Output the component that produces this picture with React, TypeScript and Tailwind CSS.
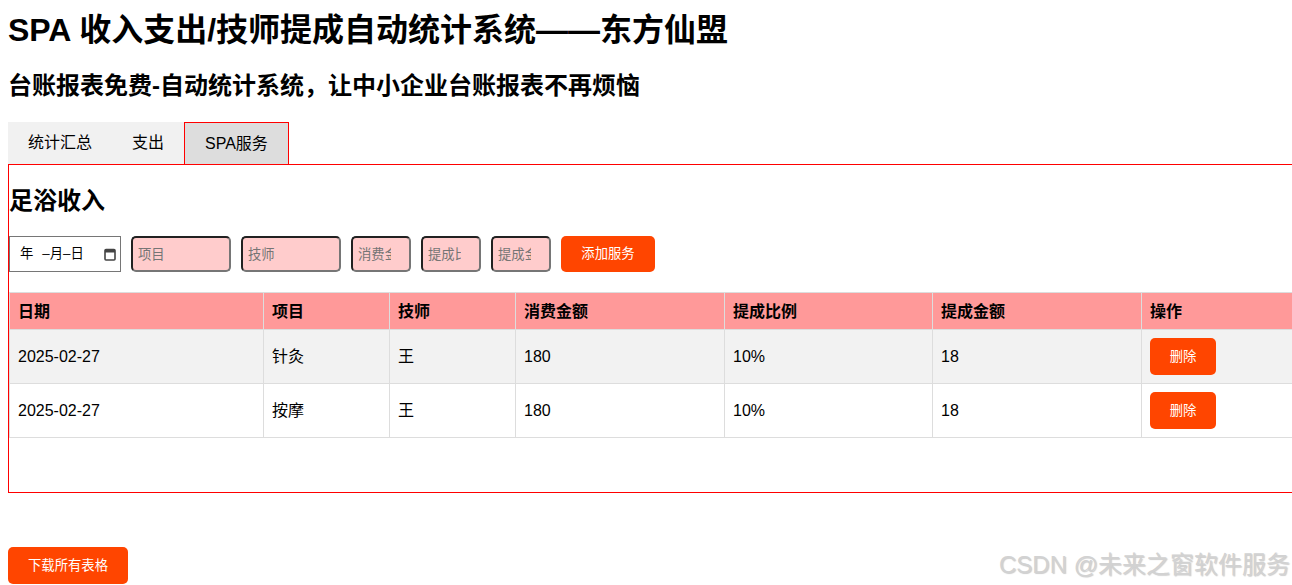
import { useState } from "react";

interface Service {
  date: string;
  item: string;
  tech: string;
  amount: number;
  rate: string;
  commission: number;
}

const TABS = ["统计汇总", "支出", "SPA服务"];

const COLUMNS = [
  { label: "日期", width: "w-[254px]" },
  { label: "项目", width: "w-[126px]" },
  { label: "技师", width: "w-[126px]" },
  { label: "消费金额", width: "w-[209px]" },
  { label: "提成比例", width: "w-[208px]" },
  { label: "提成金额", width: "w-[209px]" },
  { label: "操作", width: "" },
];

const INPUTS = [
  { placeholder: "项目", width: "w-[100px] pr-[5px]" },
  { placeholder: "技师", width: "w-[100px] pr-[5px]" },
  { placeholder: "消费金额", width: "w-[60px] pr-[18px]" },
  { placeholder: "提成比例", width: "w-[60px] pr-[18px]" },
  { placeholder: "提成金额", width: "w-[60px] pr-[18px]" },
];

const INITIAL: Service[] = [
  { date: "2025-02-27", item: "针灸", tech: "王", amount: 180, rate: "10%", commission: 18 },
  { date: "2025-02-27", item: "按摩", tech: "王", amount: 180, rate: "10%", commission: 18 },
];

const CalendarIcon = () => (
  <svg width="12" height="13" viewBox="0 0 12 13" className="text-[#444]">
    <rect x="1" y="1.5" width="10" height="10.5" rx="1" fill="none" stroke="currentColor" strokeWidth="1.6" />
    <rect x="1" y="1.5" width="10" height="3" fill="currentColor" />
  </svg>
);

const App = () => {
  const [activeTab, setActiveTab] = useState("SPA服务");
  const [services, setServices] = useState<Service[]>(INITIAL);

  const removeService = (index: number) => {
    setServices(services.filter((_, i) => i !== index));
  };

  return (
    <div className="relative w-full overflow-hidden px-2 pt-[10px] text-black font-['Liberation_Sans','Noto_Sans_CJK_SC',sans-serif]">
      <h1 className="text-[32px] font-bold leading-[40px]">
        SPA 收入支出/技师提成自动统计系统——东方仙盟
      </h1>
      <h2 className="mt-[21px] text-[24px] font-bold leading-[30px]">
        台账报表免费-自动统计系统，让中小企业台账报表不再烦恼
      </h2>

      <div className="mt-[21px] flex">
        {TABS.map((tab) => (
          <button
            key={tab}
            onClick={() => setActiveTab(tab)}
            className={`h-[42px] px-5 text-[16px] leading-[18px] ${
              activeTab === tab
                ? "bg-[#dddddd] border border-b-0 border-[#ff0000]"
                : "bg-[#f1f1f1]"
            }`}>
            {tab}
          </button>
        ))}
      </div>

      <div className="w-[1320px] border border-[#ff0000] pb-[54px]">
        <h2 className="mt-[21px] text-[24px] font-bold leading-[30px]">足浴收入</h2>

        <div className="mt-5 flex gap-[10px]">
          <div className="flex h-[36px] w-[112px] items-center justify-between border border-[#767676] pl-[10px] pr-[4px] text-[13.33px]">
            <span>
              年<span className="ml-[9px]">–月–日</span>
            </span>
            <CalendarIcon />
          </div>
          {INPUTS.map((input) => (
            <input
              key={input.placeholder}
              placeholder={input.placeholder}
              className={`h-[36px] ${input.width} rounded-[5px] border-2 border-[#767676] [border-style:inset] bg-[#ffcccc] pl-[5px] text-[13.33px] placeholder:text-[#757575]`}
            />
          ))}
          <button className="h-[36px] w-[94px] rounded-[5px] bg-[#ff4500] text-[13.33px] text-white">
            添加服务
          </button>
        </div>

        <table className="mt-5 w-full table-fixed border-collapse text-[16px]">
          <colgroup>
            {COLUMNS.map((col) => (
              <col key={col.label} className={col.width} />
            ))}
          </colgroup>
          <thead>
            <tr className="bg-[#ff9999]">
              {COLUMNS.map((col) => (
                <th
                  key={col.label}
                  className="border border-[#dddddd] px-2 pt-[9px] pb-[7px] text-left font-bold leading-[20px]">
                  {col.label}
                </th>
              ))}
            </tr>
          </thead>
          <tbody>
            {services.map((s, i) => (
              <tr key={i} className={i % 2 === 0 ? "bg-[#f2f2f2]" : "bg-white"}>
                <td className="border border-[#dddddd] px-2 py-2">{s.date}</td>
                <td className="border border-[#dddddd] px-2 py-2">{s.item}</td>
                <td className="border border-[#dddddd] px-2 py-2">{s.tech}</td>
                <td className="border border-[#dddddd] px-2 py-2">{s.amount}</td>
                <td className="border border-[#dddddd] px-2 py-2">{s.rate}</td>
                <td className="border border-[#dddddd] px-2 py-2">{s.commission}</td>
                <td className="border border-[#dddddd] px-2 py-2">
                  <button
                    onClick={() => removeService(i)}
                    className="h-[37px] w-[66px] rounded-[5px] bg-[#ff4500] text-[13.33px] text-white">
                    删除
                  </button>
                </td>
              </tr>
            ))}
          </tbody>
        </table>
      </div>

      <button className="mt-[54px] h-[37px] w-[120px] rounded-[5px] bg-[#ff4500] text-[13.33px] text-white">
        下载所有表格
      </button>

      <div className="pointer-events-none absolute left-[999px] top-[550px] text-[24px] leading-[30px] text-[#d2d2d2] [text-shadow:1px_1px_1px_rgba(0,0,0,0.2)]">
        CSDN @未来之窗软件服务
      </div>
    </div>
  );
};

export default App;
